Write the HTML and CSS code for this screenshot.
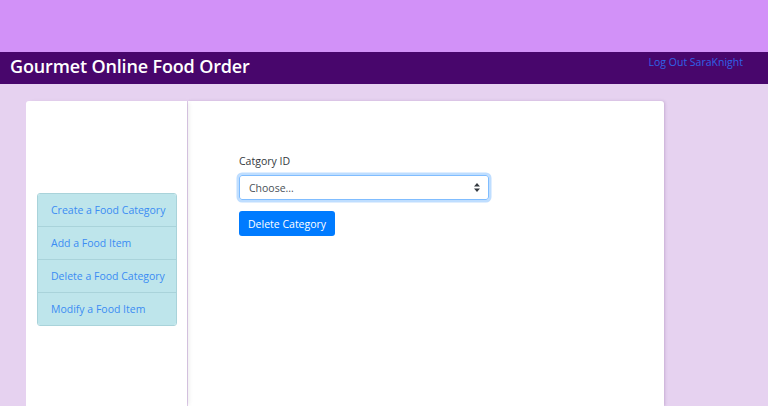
FILE: index.html
```html
<!DOCTYPE html>
<html>
<head>
<meta charset="utf-8">
<link rel="stylesheet" href="styles.css">
</head>
<body>
<div class="topbar"></div>
<header class="header">
  <h1 class="brand">Gourmet Online Food Order</h1>
  <a class="logout" href="#">Log Out SaraKnight</a>
</header>
<main class="main">
  <aside class="side-card">
    <ul class="menu">
      <li class="menu-item"><a href="#">Create a Food Category</a></li>
      <li class="menu-item"><a href="#">Add a Food Item</a></li>
      <li class="menu-item"><a href="#">Delete a Food Category</a></li>
      <li class="menu-item"><a href="#">Modify a Food Item</a></li>
    </ul>
  </aside>
  <section class="content-card">
    <form class="form">
      <label class="label">Catgory ID</label>
      <div class="select">
        <span class="select-text">Choose...</span>
        <svg class="select-arrow" width="6" height="9" viewBox="0 0 6 9"><path d="M3 0 L6 3.5 H0 Z M3 9 L0 5.5 H6 Z" fill="#343a40"/></svg>
      </div>
      <button class="btn" type="button">Delete Category</button>
    </form>
  </section>
</main>
</body>
</html>
```
FILE: styles.css
```css
* { box-sizing: border-box; }
html, body { margin: 0; padding: 0; }
body {
  font-family: "Open Sans", "Noto Sans", sans-serif;
  background: #e6d2f0;
  height: 406px;
  overflow: hidden;
}
.topbar {
  height: 52px;
  background: #d291f8;
}
.header {
  height: 32px;
  background: #48066c;
  display: flex;
  justify-content: space-between;
  align-items: flex-start;
  padding: 0 25px 0 10px;
}
.brand {
  margin: 0;
  color: #fff;
  font-size: 18px;
  font-weight: 600;
  line-height: 26px;
  padding-top: 1px;
  letter-spacing: -0.15px;
}
.logout {
  color: #2f63e8;
  text-decoration: none;
  font-size: 10.5px;
  line-height: 16px;
  padding-top: 2px;
  padding-left: 2px;
}
.main {
  display: flex;
  padding: 17px 0 0 26px;
  align-items: flex-start;
}
.side-card {
  width: 161px;
  height: 305px;
  background: #fff;
  border-radius: 3px 0 0 0;
  padding: 92px 10px 0 11px;
  box-shadow: 3px 0 4px -1px rgba(0,0,0,0.08);
  position: relative;
  z-index: 1;
}
.menu {
  list-style: none;
  margin: 0;
  padding: 0;
  border: 1px solid #a9d3da;
  border-radius: 3px;
  overflow: hidden;
}
.menu-item {
  background: #bee5eb;
  height: 33px;
  padding: 0 13px;
  display: flex;
  align-items: center;
  border-top: 1px solid #a9d3da;
}
.menu-item:first-child { border-top: 0; height: 32px; }
.menu-item a {
  color: #3b8cf3;
  text-decoration: none;
  font-size: 10.5px;
  white-space: nowrap;
}
.content-card {
  width: 476px;
  height: 305px;
  margin-left: 1px;
  background: #fff;
  border-radius: 0 3px 0 0;
  box-shadow: 1px 0 3px rgba(90,40,110,0.22);
  padding: 52px 0 0 51px;
}
.form {
  display: flex;
  flex-direction: column;
  align-items: flex-start;
}
.label {
  font-size: 10.5px;
  color: #33383d;
  line-height: 16px;
  margin-bottom: 6px;
}
.select {
  width: 250px;
  height: 25px;
  border: 1px solid #80bdff;
  border-radius: 3px;
  box-shadow: 0 0 0 2.5px rgba(0,123,255,0.25);
  display: flex;
  align-items: center;
  justify-content: space-between;
  padding: 0 8px 0 9px;
  margin-bottom: 11px;
}
.select-text {
  font-size: 10.5px;
  color: #495057;
}
.btn {
  font-family: inherit;
  background: #007bff;
  color: #fff;
  border: 0;
  border-radius: 3px;
  height: 25px;
  padding: 0 9px;
  font-size: 10.5px;
}
```
